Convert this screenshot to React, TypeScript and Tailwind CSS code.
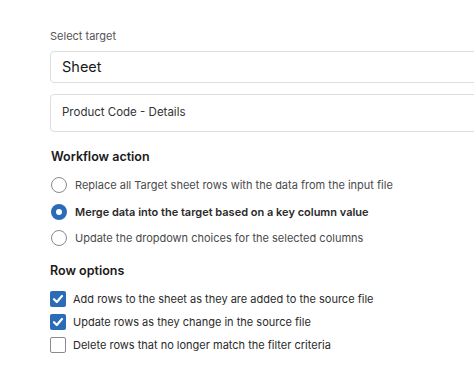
import { useState } from "react";

const workflowOptions = [
    "Replace all Target sheet rows with the data from the input file",
    "Merge data into the target based on a key column value",
    "Update the dropdown choices for the selected columns",
];

const rowOptions = [
    { label: "Add rows to the sheet as they are added to the source file", checked: true },
    { label: "Update rows as they change in the source file", checked: true },
    { label: "Delete rows that no longer match the filter criteria", checked: false },
];

export default function App() {
    const [workflow, setWorkflow] = useState<number>(1);
    const [rows, setRows] = useState<boolean[]>(rowOptions.map(r => r.checked));

    return (
        <div className="w-[474px] h-[385px] overflow-hidden bg-white font-['Inter','Noto_Sans',sans-serif] text-[#222]">
            <div className="pl-[50px] pt-[28px]">
                <p className="text-[11px] leading-4 text-[#555]">Select target</p>
                <div className="mt-[7px] w-[460px] h-[32px] flex items-center pl-[11px] border border-[#dedede] rounded-[4px] text-[14.5px] text-[#1a1a1a]">
                    Sheet
                </div>
                <div className="mt-[11px] w-[460px] h-[38px] flex items-center pl-[11px] border border-[#dedede] rounded-[4px] text-[11.5px] text-[#333]">
                    Product Code - Details
                </div>

                <h3 className="mt-[15px] text-[12.5px] leading-5 font-semibold text-[#1a1a1a] pl-px">Workflow action</h3>
                <div className="mt-[5px] flex flex-col">
                    {workflowOptions.map((label, i) => {
                        const selected = workflow === i;
                        return (
                            <label
                                key={i}
                                className="h-[26.5px] flex items-center gap-[8px] pl-px cursor-pointer"
                                onClick={() => setWorkflow(i)}
                            >
                                {selected ? (
                                    <span className="w-[16px] h-[16px] rounded-full bg-[#2b6cb8] flex items-center justify-center">
                                        <span className="w-[6px] h-[6px] rounded-full bg-white" />
                                    </span>
                                ) : (
                                    <span className="w-[16px] h-[16px] rounded-full border-[1.5px] border-[#8a8a8a] bg-white" />
                                )}
                                <span className={selected ? "text-[11px] font-semibold text-[#2a2a2a]" : "text-[11px] text-[#4a4a4a]"}>
                                    {label}
                                </span>
                            </label>
                        );
                    })}
                </div>

                <h3 className="mt-[9px] text-[12.5px] leading-5 font-semibold text-[#1a1a1a]">Row options</h3>
                <div className="mt-[7px] flex flex-col">
                    {rowOptions.map((opt, i) => (
                        <label
                            key={i}
                            className="h-[23px] flex items-center gap-[7px] cursor-pointer"
                            onClick={() => setRows(rows.map((r, j) => (j === i ? !r : r)))}
                        >
                            {rows[i] ? (
                                <span className="w-[16px] h-[16px] rounded-[2px] bg-[#2b6cb8] flex items-center justify-center">
                                    <svg width="12" height="12" viewBox="0 0 12 12" fill="none">
                                        <path d="M2 6.2L4.8 9L10 3" stroke="white" strokeWidth="2.2" strokeLinecap="round" strokeLinejoin="round" />
                                    </svg>
                                </span>
                            ) : (
                                <span className="w-[16px] h-[16px] rounded-[2px] border border-[#8a8a8a] bg-white" />
                            )}
                            <span className="text-[11px] text-[#2a2a2a]">{opt.label}</span>
                        </label>
                    ))}
                </div>
            </div>
        </div>
    );
}
